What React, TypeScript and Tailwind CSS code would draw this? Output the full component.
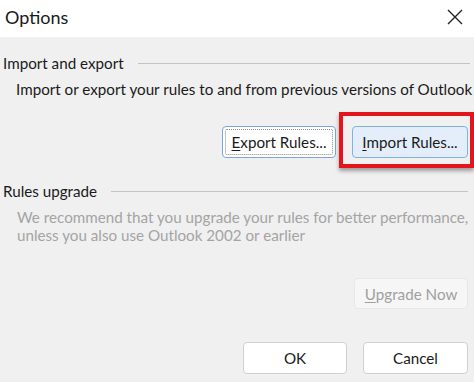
export default function App() {
  const font = { fontFamily: 'Lato, "Noto Sans", sans-serif' };
  return (
    <div className="w-[474px] h-[382px] flex flex-col overflow-hidden text-[#1a1a1a]" style={font}>
      {/* Title bar */}
      <div className="h-[37px] bg-white flex items-center justify-between pl-[5px] pr-[11px] pb-[4px]">
        <span className="text-[18px] leading-none">Options</span>
        <svg width="16" height="16" viewBox="0 0 16 16" className="text-[#222]">
          <path d="M1 1 L15 15 M15 1 L1 15" stroke="currentColor" strokeWidth="1.4" />
        </svg>
      </div>

      {/* Body */}
      <div className="flex-1 bg-[#f0f0f0] flex flex-col text-[15.2px] leading-[20px]">
        {/* Import and export */}
        <div className="mt-[16px] flex items-center pl-[3px] pr-[4px]">
          <span>Import and export</span>
          <div className="ml-[14px] flex-1 h-px bg-[#c4c4c4]" />
        </div>
        <p className="mt-[6px] pl-[16px] whitespace-nowrap">
          Import or export your rules to and from previous versions of Outlook
        </p>
        <div className="mt-[27px] flex justify-end gap-[16px] pr-[6px]">
          <button className="w-[114px] h-[32px] rounded-[4px] border border-[#7aa7d6] bg-white p-[2px]">
            <span className="flex h-full w-full items-center justify-center border border-dotted border-[#8a8a8a] rounded-[2px]">
              <span className="underline decoration-1 underline-offset-2">E</span>xport Rules...
            </span>
          </button>
          <div className="relative">
            <button className="w-[116px] h-[32px] rounded-[4px] border border-[#7eb3e6] bg-[#e3eefa] flex items-center justify-center">
              <span className="underline decoration-1 underline-offset-2">I</span>mport Rules...
            </button>
            <div className="absolute left-[-13px] top-[-14px] w-[135px] h-[56px] border-[4px] border-[#e3141b] shadow-[0_3px_4px_rgba(0,0,0,0.35)]" />
          </div>
        </div>

        {/* Rules upgrade */}
        <div className="mt-[23px] flex items-center pl-[3px] pr-[6px]">
          <span>Rules upgrade</span>
          <div className="ml-[14px] flex-1 h-px bg-[#c4c4c4]" />
        </div>
        <p className="mt-[7px] pl-[17px] text-[#a4a4a4] leading-[18px] whitespace-nowrap">
          We recommend that you upgrade your rules for better performance,
          <br />
          unless you also use Outlook 2002 or earlier
        </p>
        <div className="mt-[34px] flex justify-end pr-[6px]">
          <button className="w-[114px] h-[31px] rounded-[4px] border border-[#e8e8e8] bg-[#f6f6f6] text-[#a0a0a0] flex items-center justify-center">
            <span className="underline decoration-1 underline-offset-2">U</span>pgrade Now
          </button>
        </div>

        {/* Footer */}
        <div className="mt-[33px] flex justify-end gap-[16px] pr-[6px]">
          <button className="w-[104px] h-[32px] rounded-[4px] border border-[#d0d0d0] bg-white">OK</button>
          <button className="w-[105px] h-[32px] rounded-[4px] border border-[#d0d0d0] bg-white">Cancel</button>
        </div>
      </div>
    </div>
  );
}
